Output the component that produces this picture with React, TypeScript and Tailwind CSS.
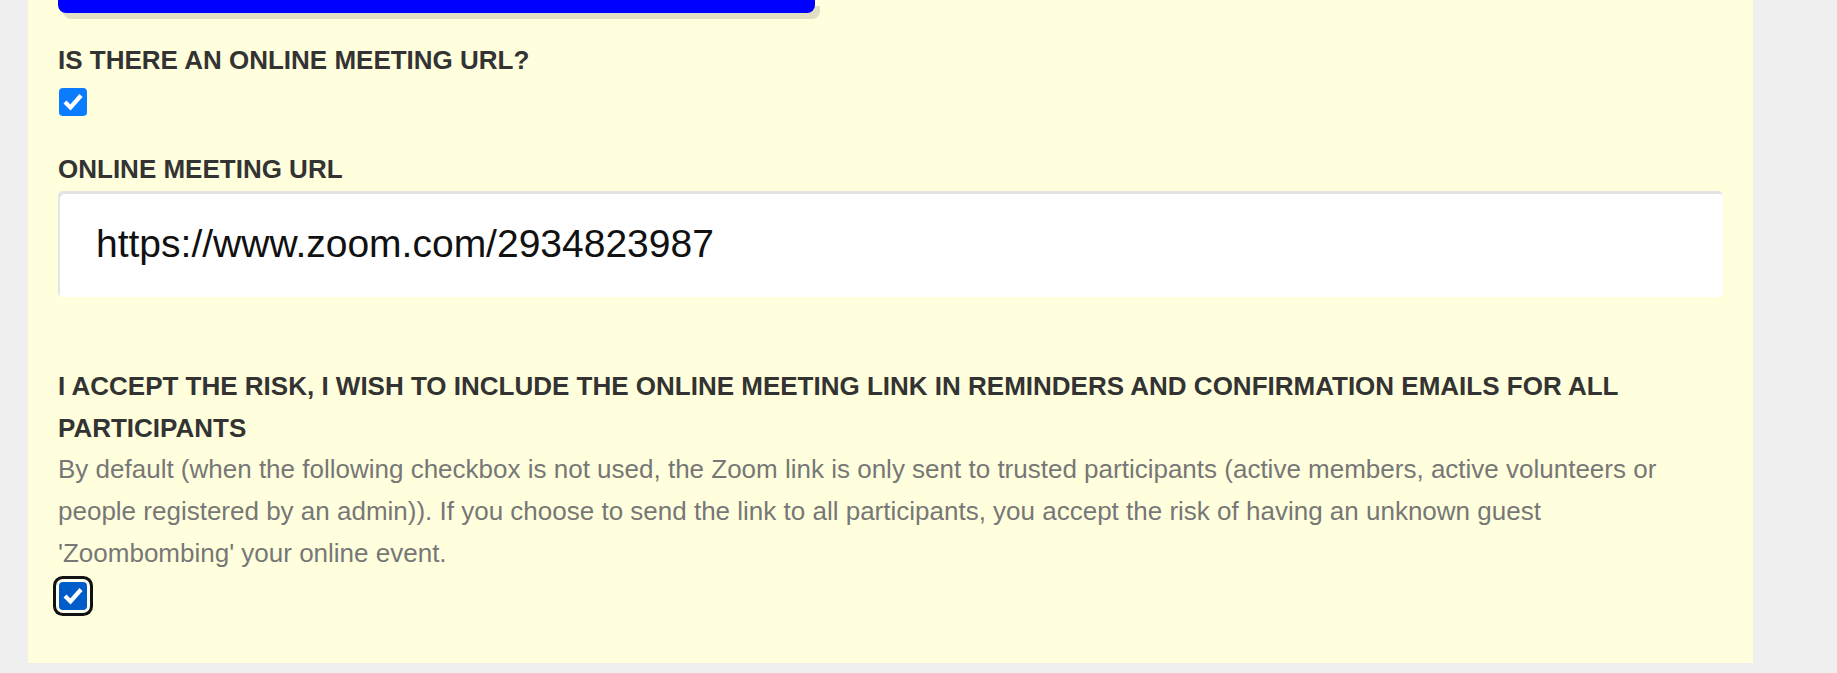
import React from "react";

function Check({ focused }: { focused?: boolean }) {
  return (
    <div
      className={
        focused
          ? "ml-[1px] h-[28px] w-[28px] rounded-[4px] bg-[#005cc8] flex items-center justify-center shadow-[0_0_0_3px_#fffff0,0_0_0_6px_#111111]"
          : "ml-[1px] h-[28px] w-[28px] rounded-[4px] bg-[#0b7bff] flex items-center justify-center"
      }
    >
      <svg width="28" height="28" viewBox="0 0 28 28">
        <path
          d="M6 14 L11.5 19.5 L22 7.5"
          fill="none"
          stroke="#ffffff"
          strokeWidth="4.2"
          strokeLinecap="butt"
          strokeLinejoin="miter"
        />
      </svg>
    </div>
  );
}

export default function App() {
  const font = { fontFamily: '"Liberation Sans", Arial, Helvetica, sans-serif' };
  return (
    <div className="w-full h-[673px] bg-[#efefef] pl-[28px] overflow-hidden" style={font}>
      <div className="w-[1725px] bg-[#ffffdd] px-[30px] pb-[53px]">
        <div className="h-[13px] w-[757px] bg-[#0000ff] rounded-b-[8px] shadow-[5px_6px_0_#e0dfc4]" />

        <div className="mt-[27px] text-[26px] leading-[41.6px] font-bold text-[#333333]">
          IS THERE AN ONLINE MEETING URL?
        </div>
        <div className="mt-[6px]">
          <Check />
        </div>

        <div className="mt-[33px] text-[26px] leading-[41.6px] font-bold text-[#333333]">
          ONLINE MEETING URL
        </div>
        <div className="mt-[1px] h-[106px] w-full rounded-[5px] bg-white shadow-[inset_2px_3px_0_#e4e4e4] flex items-center pl-[38px]">
          <span className="text-[39px] text-[#111111] leading-normal">https://www.zoom.com/2934823987</span>
        </div>

        <div className="mt-[69px] text-[26px] leading-[41.6px] font-bold text-[#333333]">
          I ACCEPT THE RISK, I WISH TO INCLUDE THE ONLINE MEETING LINK IN REMINDERS AND CONFIRMATION EMAILS FOR ALL PARTICIPANTS
        </div>
        <div className="text-[26px] leading-[41.6px] text-[#777777]">
          By default (when the following checkbox is not used, the Zoom link is only sent to trusted participants (active members, active volunteers or people registered by an admin)). If you choose to send the link to all participants, you accept the risk of having an unknown guest 'Zoombombing' your online event.
        </div>
        <div className="mt-[8px]">
          <Check focused />
        </div>
      </div>
    </div>
  );
}
